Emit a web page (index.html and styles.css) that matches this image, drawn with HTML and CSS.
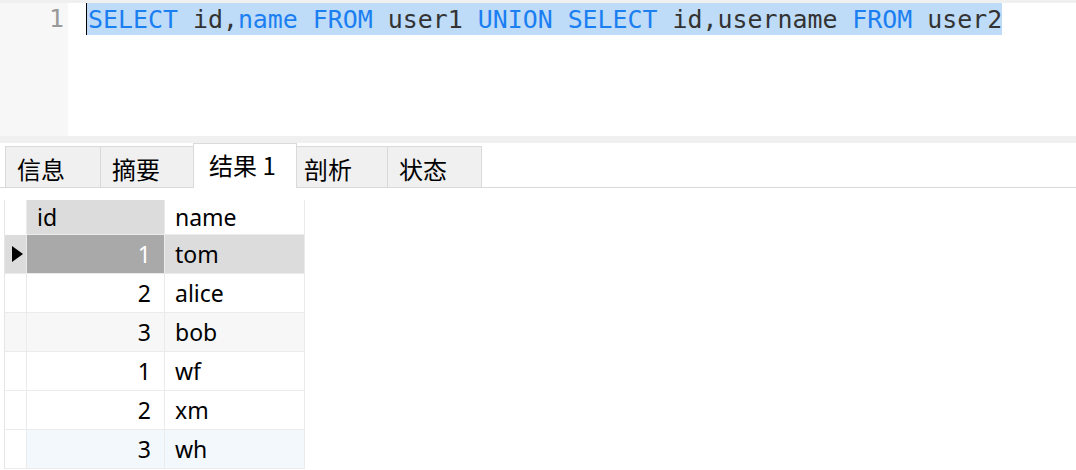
FILE: index.html
```html
<!DOCTYPE html>
<html lang="zh">
<head>
<meta charset="utf-8">
<title>Query</title>
<link rel="stylesheet" href="styles.css">
</head>
<body>
<div class="editor-wrap">
  <div class="editor">
    <div class="gutter"><div class="lineno">1</div></div>
    <div class="code"><span class="sel"><span class="kw">SELECT</span> id,<span class="kw">name</span> <span class="kw">FROM</span> user1 <span class="kw">UNION</span> <span class="kw">SELECT</span> id,username <span class="kw">FROM</span> user2</span></div>
  </div>
</div>
<div class="tabbar">
  <div class="tab t1">信息</div>
  <div class="tab t2">摘要</div>
  <div class="tab t3 active">结果 1</div>
  <div class="tab t4">剖析</div>
  <div class="tab t5">状态</div>
</div>
<div class="panel">
  <div class="grid">
    <div class="rh corner"></div>
    <div class="hd hd-sel">id</div>
    <div class="hd">name</div>

    <div class="rh rh-cur"><span class="tri"></span></div>
    <div class="c num cur-id">1</div>
    <div class="c cur-row">tom</div>

    <div class="rh"></div>
    <div class="c num">2</div>
    <div class="c">alice</div>

    <div class="rh alt"></div>
    <div class="c num alt">3</div>
    <div class="c alt">bob</div>

    <div class="rh"></div>
    <div class="c num">1</div>
    <div class="c">wf</div>

    <div class="rh"></div>
    <div class="c num">2</div>
    <div class="c">xm</div>

    <div class="rh"></div>
    <div class="c num hover">3</div>
    <div class="c hover">wh</div>
  </div>
</div>
</body>
</html>
```
FILE: styles.css
```css
html, body {
  margin: 0;
  padding: 0;
  background: #ffffff;
}
body {
  width: 1076px;
  height: 470px;
  overflow: hidden;
}
.editor-wrap {
  background: #f0f0f0;
  padding: 3px 0 7px 0;
}
.editor {
  display: flex;
  height: 133px;
}
.gutter {
  width: 68px;
  background: #f7f7f7;
}
.lineno {
  font-family: "DejaVu Sans Mono", monospace;
  font-size: 24.9px;
  line-height: 32px;
  color: #999999;
  text-align: right;
  padding-right: 4px;
}
.code {
  flex: 1;
  background: #ffffff;
  padding-left: 18px;
  font-family: "DejaVu Sans Mono", monospace;
  font-size: 24.9px;
  line-height: 33px;
  color: #333333;
  white-space: pre;
}
.sel {
  display: inline-block;
  background: #bedcf7;
  border-left: 1px solid #000000;
  padding-left: 1px;
  height: 32px;
}
.kw {
  color: #1b7ff2;
}
.tabbar {
  display: flex;
  align-items: flex-end;
  height: 44px;
  padding-left: 5px;
  border-bottom: 1px solid #d9d9d9;
  font-family: "Noto Sans CJK SC", sans-serif;
  font-size: 24px;
  color: #000000;
}
.tab {
  box-sizing: border-box;
  height: 41px;
  background: #f0f0f0;
  border: 1px solid #d9d9d9;
  border-bottom: none;
  margin-right: -1px;
  padding-left: 11px;
  line-height: 43px;
}
.t1 { width: 96px; }
.t2 { width: 98px; }
.t4 { width: 96px; }
.t5 { width: 95px; }
.tab.active {
  position: relative;
  z-index: 1;
  width: 104px;
  height: 45px;
  margin: 0 -5px -1px -4px;
  padding-left: 15px;
  background: #ffffff;
  line-height: 42px;
}
.panel {
  padding: 12px 0 0 4px;
  font-family: "Noto Sans", "Noto Sans CJK SC", sans-serif;
  font-size: 23px;
  color: #000000;
}
.grid {
  display: grid;
  grid-template-columns: 22px 138px 140px;
  grid-template-rows: 35px repeat(6, 39px);
  width: 300px;
  border-left: 1px solid #e6e6e6;
}
.rh, .c, .hd {
  box-sizing: border-box;
  border-bottom: 1px solid #ebebeb;
  border-right: 1px solid #ebebeb;
}
.hd {
  padding-left: 10px;
  line-height: 35px;
  background: #ffffff;
}
.hd-sel {
  background: #dcdcdc;
}
.corner {
  background: #ffffff;
  border-bottom: none;
}
.rh {
  background: #ffffff;
  display: flex;
  align-items: center;
}
.rh-cur {
  background: #dcdcdc;
}
.tri {
  width: 0;
  height: 0;
  margin-left: 7px;
  border-top: 8px solid transparent;
  border-bottom: 8px solid transparent;
  border-left: 11px solid #000000;
}
.c {
  line-height: 38px;
  padding-left: 10px;
}
.c.num {
  text-align: right;
  padding-left: 0;
  padding-right: 13px;
}
.cur-id {
  background: #a9a9a9;
  color: #ffffff;
}
.cur-row {
  background: #dcdcdc;
}
.alt {
  background: #f7f7f7;
}
.hover {
  background: #f3f8fd;
}
```
